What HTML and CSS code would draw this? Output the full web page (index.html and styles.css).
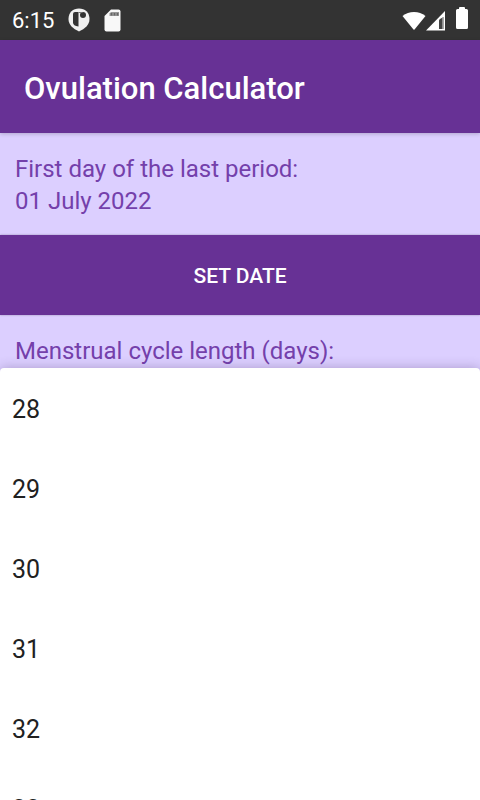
FILE: index.html
```html
<!DOCTYPE html>
<html lang="en">
<head>
<meta charset="utf-8">
<meta name="viewport" content="width=device-width, initial-scale=1">
<title>Ovulation Calculator</title>
<link rel="stylesheet" href="styles.css">
</head>
<body>
<div class="status">
  <span class="clock">6:15</span>
  <svg class="icon-app" width="22" height="24" viewBox="0 0 22 24" aria-hidden="true"><path d="M11 0.5C17 0.5 21.500 4.500 21.500 11C21.500 17 17 20.500 11 23.500C5 20.500 0.500 17 0.500 11C0.500 4.500 5 0.500 11 0.500z" fill="#f0f0f0"/><path d="M5 6q0-2 2-2h3.500v14.500q-5.500-0.500-5.500-4z" fill="#333"/><circle cx="15" cy="7" r="3" fill="#333"/><path d="M10.500 4.500h4" stroke="#777" stroke-width="1"/></svg>
  <svg class="icon-card" width="17" height="23" viewBox="0 0 17 23" aria-hidden="true"><path d="M7 0.500h7.500q2 0 2 2v18q0 2-2 2h-12q-2 0-2-2V7z" fill="#f8f8f8"/><path d="M7 3h8v4H5.500V4.500z" fill="#999"/><path d="M7.500 4v2.500M10.500 4v2.500M13.500 4v2.500" stroke="#666" stroke-width="1.500"/></svg>
  <div class="signals">
    <svg width="24" height="20" viewBox="0 0 24 20" aria-hidden="true"><path d="M0.500 5Q5.500 1 12 1T23.500 5L12.500 18.500q-0.500 0.500-1 0z" fill="#fff"/></svg>
    <svg width="20" height="20" viewBox="0 0 20 20" aria-hidden="true"><path d="M19 0v19.500H0z" fill="#fff"/><path d="M17.500 6v12h-4.500V9.500q0-1 1-1.500z" fill="#444"/><path d="M17 7v11" stroke="#aaa" stroke-width="1.500"/></svg>
    <svg class="battery" width="12" height="22" viewBox="0 0 12 22" aria-hidden="true"><path d="M3 1q0-1 1-1h4q1 0 1 1v1h1.500q1.500 0 1.500 1.500v17q0 1.500-1.500 1.500h-9Q0 22 0 20.500v-17Q0 2 1.500 2H3z" fill="#fff"/></svg>
  </div>
</div>
<header class="bar"><h1>Ovulation Calculator</h1></header>
<main>
  <p class="label">First day of the last period:<br>01 July 2022</p>
  <button class="set" type="button">SET DATE</button>
  <p class="label" id="cycle">Menstrual cycle length (days):</p>
</main>
<div class="menu" role="listbox" aria-labelledby="cycle">
  <button type="button" role="option">28</button>
  <button type="button" role="option">29</button>
  <button type="button" role="option">30</button>
  <button type="button" role="option">31</button>
  <button type="button" role="option">32</button>
  <button type="button" role="option">33</button>
</div>
</body>
</html>
```
FILE: styles.css
```css
* { box-sizing: border-box; }
body { margin: 0; height: 100vh; overflow: hidden; display: flex; flex-direction: column; background: #dccfff; font-family: Roboto, sans-serif; }
.status { flex: none; height: 40px; padding: 0 12px; display: flex; align-items: center; background: #333; color: #fff; }
.clock { font-size: 22px; }
.icon-app { margin-left: 14px; }
.icon-card { margin-left: 14px; }
.signals { margin-left: auto; padding-bottom: 2px; display: flex; align-items: flex-end; }
.battery { margin: 0 0 2px 10px; }
.bar { flex: none; height: 93px; padding: 4px 24px 0; display: flex; align-items: center; background: #673195; box-shadow: 0 1px 4px rgba(0,0,0,.2); color: #fff; }
h1 { margin: 0; font-size: 31px; font-weight: 500; }
.label { margin: 0; padding: 20px 15px 18px; font-size: 24px; line-height: 32px; color: #7440ab; }
.set { display: block; width: 100%; height: 80px; padding: 2px 0 0; border: 0; background: #673195; box-shadow: 0 0 2px rgba(0,0,0,.3); color: #fff; font: 500 21px Roboto, sans-serif; }
.menu { position: absolute; inset: 368px 0 0; overflow: hidden; border-radius: 4px 4px 0 0; background: #fff; box-shadow: 0 0 12px rgba(60,40,90,.3); }
.menu button { display: block; width: 100%; height: 80px; padding: 2px 12px 0; border: 0; background: none; text-align: left; color: #212121; font: 25px Roboto, sans-serif; }
```
